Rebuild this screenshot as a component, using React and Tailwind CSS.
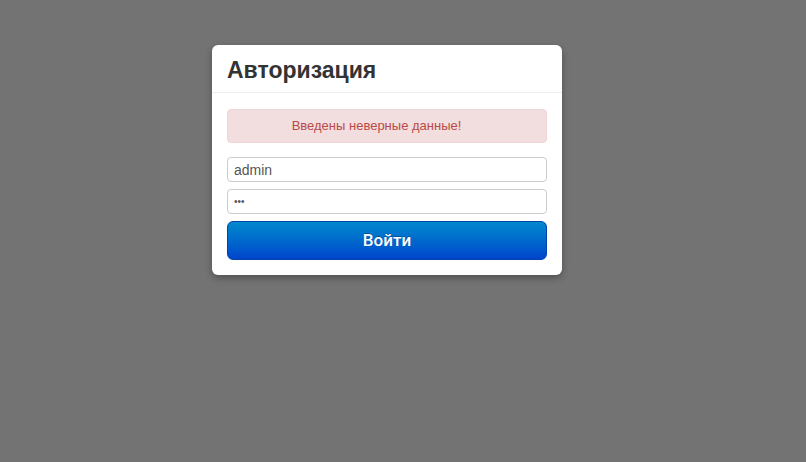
export default function App() {
  return (
    <div className="min-h-[462px] w-full bg-[#737373]" style={{ fontFamily: '"Liberation Sans", Arial, sans-serif' }}>
      <div className="pl-[212px] pt-[45px]">
        <div className="w-[350px] rounded-[6px] bg-white shadow-[0_3px_7px_rgba(0,0,0,0.3)]">
          <div className="h-[48px] border-b border-[#eeeeee] px-[15px] pt-[10px]">
            <h3 className="text-[23px] font-bold leading-[30px] text-[#333333]">Авторизация</h3>
          </div>
          <div className="px-[15px] pb-[15px] pt-[16px]">
            <div className="mb-[14px] rounded-[4px] border border-[#eed3d7] bg-[#f2dede] py-[7px] pl-[14px] pr-[35px] text-center text-[13px] leading-[18px] text-[#b94a48]">
              Введены неверные данные!
            </div>
            <input
              readOnly
              value="admin"
              className="mb-[7px] block h-[25px] w-full rounded-[4px] border border-[#cccccc] px-[6px] text-[14px] text-[#555555] outline-none"
            />
            <input
              readOnly
              type="password"
              value="123"
              className="mb-[7px] block h-[25px] w-full rounded-[4px] border border-[#cccccc] px-[6px] text-[10px] text-[#555555] outline-none"
            />
            <button
              className="block h-[39px] w-full rounded-[6px] border border-[#0044aa] bg-gradient-to-b from-[#0088cc] to-[#0044cc] text-[17px] font-medium text-white [text-shadow:0_-1px_0_rgba(0,0,0,0.25)]"
              style={{ fontFamily: 'Roboto, "Liberation Sans", sans-serif' }}
            >
              Войти
            </button>
          </div>
        </div>
      </div>
    </div>
  );
}
